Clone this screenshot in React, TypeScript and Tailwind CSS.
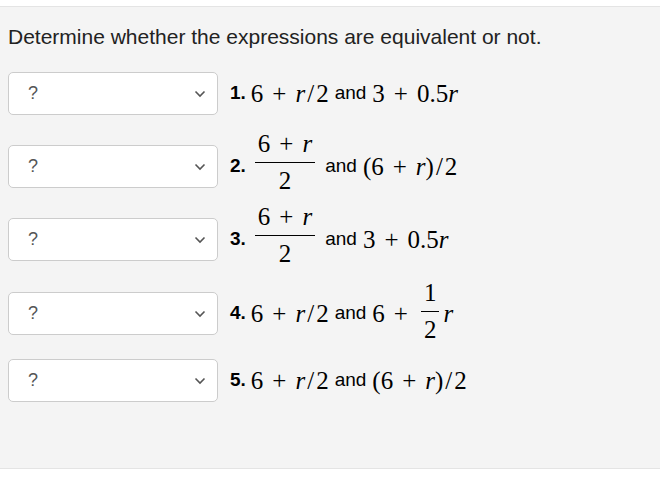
const M = "font-['Liberation_Serif',serif] text-[25px] leading-none";

function Select() {
  return (
    <div className="flex h-[43px] w-[210px] shrink-0 items-center justify-between rounded-[5px] border border-[#cccccc] bg-white pl-[19px] pr-[11px]">
      <span className="text-[18px] text-[#555]">?</span>
      <svg width="12" height="8" viewBox="0 0 12 8" fill="none">
        <path d="M1.5 1.5 L6 6 L10.5 1.5" stroke="#555" strokeWidth="1.6" />
      </svg>
    </div>
  );
}

function I({ children }: { children: React.ReactNode }) {
  return <span className="italic">{children}</span>;
}

function Plus() {
  return <span className="mx-[9px]">+</span>;
}

function Slash() {
  return <span className="mx-[2px]">/</span>;
}

function Frac({ num, den, up }: { num: React.ReactNode; den: React.ReactNode; up: string }) {
  return (
    <span className={`mx-[4px] inline-flex flex-col items-center ${up}`}>
      <span className="px-[3px] pb-[6px] leading-none">{num}</span>
      <span className="h-px w-full bg-black" />
      <span className="pt-[5px] leading-none">{den}</span>
    </span>
  );
}

function Row({ n, mt, children }: { n: string; mt: string; children: React.ReactNode }) {
  return (
    <div className={`flex h-[43px] items-center gap-[12px] ${mt}`}>
      <Select />
      <div className="flex items-center text-black">
        <span className="mr-[5px] text-[19px] font-bold">{n}</span>
        {children}
      </div>
    </div>
  );
}

function And() {
  return <span className="mx-[6px] text-[19px]">and</span>;
}

export default function App() {
  return (
    <div className="h-[487px] w-[660px] bg-white pt-[6px] font-['Liberation_Sans',Arial,sans-serif]">
      <div className="h-[463px] border-t border-b border-[#e4e4e4] bg-[#f4f4f4] px-[8px] pt-[17px]">
        <p className="text-[21px] leading-[26px] text-[#222]">
          Determine whether the expressions are equivalent or not.
        </p>
        <Row n="1." mt="mt-[22px]">
          <span className={M}>
            6<Plus /><I>r</I><Slash />2
          </span>
          <And />
          <span className={M}>
            3<Plus />0.5<I>r</I>
          </span>
        </Row>
        <Row n="2." mt="mt-[30px]">
          <span className={`${M} flex items-center`}>
            <Frac up="mb-[9px]" num={<>6<Plus /><I>r</I></>} den="2" />
          </span>
          <And />
          <span className={M}>
            (6<Plus /><I>r</I>)<Slash />2
          </span>
        </Row>
        <Row n="3." mt="mt-[30px]">
          <span className={`${M} flex items-center`}>
            <Frac up="mb-[9px]" num={<>6<Plus /><I>r</I></>} den="2" />
          </span>
          <And />
          <span className={M}>
            3<Plus />0.5<I>r</I>
          </span>
        </Row>
        <Row n="4." mt="mt-[31px]">
          <span className={M}>
            6<Plus /><I>r</I><Slash />2
          </span>
          <And />
          <span className={`${M} flex items-center`}>
            6<Plus />
            <Frac up="mb-[5px]" num="1" den="2" />
            <I>r</I>
          </span>
        </Row>
        <Row n="5." mt="mt-[24px]">
          <span className={M}>
            6<Plus /><I>r</I><Slash />2
          </span>
          <And />
          <span className={M}>
            (6<Plus /><I>r</I>)<Slash />2
          </span>
        </Row>
      </div>
    </div>
  );
}
